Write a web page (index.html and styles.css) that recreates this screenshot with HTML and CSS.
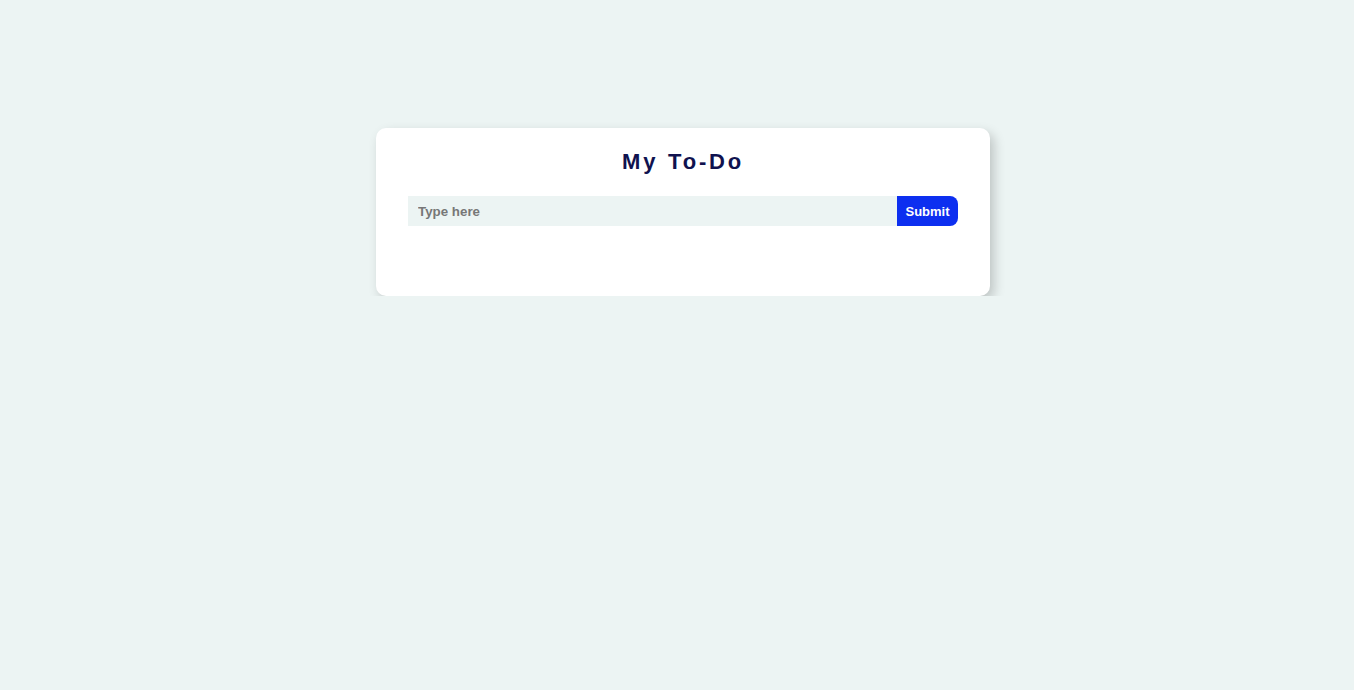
FILE: index.html
```html
<!DOCTYPE html>
<html lang="en">
<head>
<meta charset="utf-8">
<title>My To-Do</title>
<link rel="stylesheet" href="styles.css">
</head>
<body>
<div class="page">
  <div class="card">
    <h1 class="title">My To-Do</h1>
    <form class="row">
      <input class="field" type="text" placeholder="Type here">
      <button class="submit" type="button">Submit</button>
    </form>
  </div>
</div>
</body>
</html>
```
FILE: styles.css
```css
html, body {
  margin: 0;
  padding: 0;
  background: #ecf4f3;
  font-family: "Liberation Sans", Arial, sans-serif;
}
.page {
  padding: 128px 0 0 12px;
  display: flex;
  justify-content: center;
}
.card {
  box-sizing: border-box;
  width: 614px;
  height: 168px;
  padding: 20px 32px 0 32px;
  background: #fff;
  border-radius: 10px;
  box-shadow: 4px 5px 12px rgba(0, 0, 0, 0.2);
}
.title {
  margin: 0;
  text-align: center;
  font-size: 22px;
  line-height: 28px;
  font-weight: 700;
  letter-spacing: 2.8px;
  word-spacing: 1px;
  color: #10124f;
}
.row {
  display: flex;
  margin: 20px 0 0 0;
  height: 30px;
}
.field {
  flex: 1;
  min-width: 0;
  border: none;
  outline: none;
  background: #ecf4f3;
  padding: 0 10px;
  font-family: "Liberation Sans", Arial, sans-serif;
  font-size: 13.33px;
  font-weight: 700;
  color: #333;
}
.field::placeholder {
  color: #777;
  opacity: 1;
}
.submit {
  width: 61px;
  border: none;
  padding: 0;
  background: #0d2ff0;
  color: #fff;
  font-family: "Liberation Sans", Arial, sans-serif;
  font-size: 13px;
  font-weight: 700;
  border-radius: 0 8px 8px 0;
  cursor: pointer;
}
```
